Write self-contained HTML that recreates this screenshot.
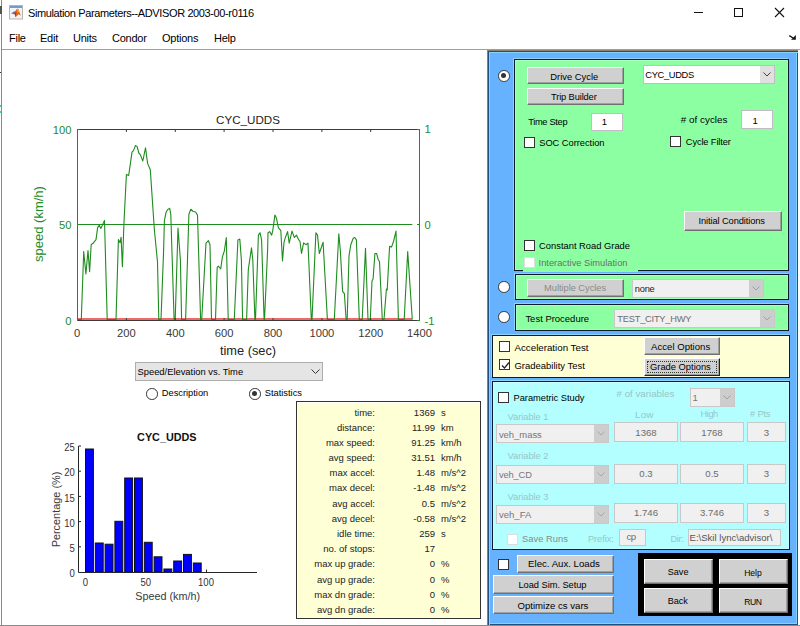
<!DOCTYPE html>
<html><head><meta charset="utf-8">
<style>
*{box-sizing:border-box;margin:0;padding:0}
html,body{width:800px;height:626px;overflow:hidden;background:#fff}
body{position:relative;font-family:"Liberation Sans",sans-serif;color:#000}
.a{position:absolute;white-space:nowrap}
.t{position:absolute;white-space:nowrap;font-size:9.5px;line-height:11px}
.btn{position:absolute;background:#d0d0d0;border-top:1px solid #fff;border-left:1px solid #fff;border-right:1px solid #707070;border-bottom:1px solid #707070;box-shadow:inset -1px -1px 0 #a0a0a0;font-size:9.5px;text-align:center;white-space:nowrap}
.chk{position:absolute;width:11px;height:11px;background:#fff;border:1px solid #333}
.chkd{position:absolute;width:11px;height:11px;background:#fff;border:1px solid #ddd}
.rad{position:absolute;width:11.5px;height:11.5px;border-radius:50%;background:#fff;border:1px solid #333}
.dot{position:absolute;left:2.25px;top:2.25px;width:5px;height:5px;border-radius:50%;background:#333}
.edit{position:absolute;background:#fff;border:1px solid #c4bcc4;font-size:9.5px;text-align:center;white-space:nowrap}
.editd{position:absolute;background:#f0f0f0;border:1px solid #c8c8c8;font-size:9.5px;text-align:center;color:#6d6d6d;white-space:nowrap}
.pop{position:absolute;background:#fff;border:1px solid #c4bcc4;font-size:9.5px;white-space:nowrap}
.popd{position:absolute;background:#f0f0f0;border:1px solid #c8c8c8;font-size:9.5px;white-space:nowrap;color:#6d6d6d}
.arr{position:absolute;right:0;top:0;bottom:0;width:14px;background:#e0e0e0}
.popd .arr{background:#cdcdcd}
.pnl{position:absolute;border:1px solid #0c1a2c;box-shadow:inset 1px 1px 0 rgba(255,255,255,.3),inset -1px -1px 0 rgba(255,255,255,.2),-1px -1px 0 rgba(150,220,255,.8)}
.green{background:#8cffa3}
.yel{background:#ffffd6}
.cyan{background:#b3ffff}
.gr{color:#6d6d6d}
.cg{color:#9cc8c8}
</style></head><body>

<!-- window frame -->
<div class="a" style="left:1px;top:0;width:1px;height:626px;background:#8a8a8a"></div>
<div class="a" style="left:0;top:6px;width:2px;height:8px;background:#555"></div>
<div class="a" style="left:0;top:72px;width:1px;height:1px;background:#333"></div>
<div class="a" style="left:0;top:105px;width:1px;height:2px;background:#4cc9a0"></div>
<div class="a" style="left:0;top:111px;width:1px;height:2px;background:#4cc9a0"></div>
<div class="a" style="left:0;top:625px;width:800px;height:1px;background:#8a8a8a"></div>

<!-- title icon -->
<svg class="a" style="left:0;top:0" width="30" height="24" viewBox="0 0 30 24">
<rect x="9.5" y="5.5" width="13" height="13.5" fill="#f4f4f4" stroke="#b4b4b4"/>
<rect x="10" y="6" width="12" height="2" fill="#6b9fd3"/>
<path d="M11 13.6 L14.2 11.3 L16.3 12.3 L15.2 14.6 Z" fill="#3b8ad2"/>
<path d="M14.3 12.6 L17.2 8.6 L18.6 9.4 L20.8 15.8 L18.6 14.2 L15.6 17.2 Z" fill="#e2621e"/>
<path d="M17.2 8.6 L18.6 9.4 L19.2 12 L17.6 12.5 Z" fill="#f2b233"/>
<path d="M14.3 12.6 L16.3 12.3 L15.6 17.2 Z" fill="#b8321a"/>
</svg>
<div class="a" style="left:28px;top:6px;font-size:11px;letter-spacing:-0.38px;color:#000;line-height:14px">Simulation Parameters--ADVISOR 2003-00-r0116</div>

<!-- window controls -->
<div class="a" style="left:694px;top:12px;width:9px;height:1.3px;background:#111"></div>
<div class="a" style="left:734px;top:8px;width:9px;height:9px;border:1px solid #111"></div>
<svg class="a" style="left:774px;top:7px" width="12" height="12" viewBox="0 0 12 12"><path d="M1 1 L10 10 M10 1 L1 10" stroke="#111" stroke-width="1.1"/></svg>
<svg class="a" style="left:786px;top:32px" width="12" height="10" viewBox="786 32 12 10"><path d="M789.3 35.6 L793 38" stroke="#111" stroke-width="1.3" fill="none"/><path d="M795.8 35 L795.8 39.8 L791 39.8 Z" fill="#111"/></svg>

<!-- menu -->
<div class="a" style="left:9px;top:31px;font-size:11px;line-height:14px;letter-spacing:-0.25px">File</div>
<div class="a" style="left:40px;top:31px;font-size:11px;line-height:14px;letter-spacing:-0.25px">Edit</div>
<div class="a" style="left:73px;top:31px;font-size:11px;line-height:14px;letter-spacing:-0.25px">Units</div>
<div class="a" style="left:112px;top:31px;font-size:11px;line-height:14px;letter-spacing:-0.25px">Condor</div>
<div class="a" style="left:162px;top:31px;font-size:11px;line-height:14px;letter-spacing:-0.25px">Options</div>
<div class="a" style="left:214px;top:31px;font-size:11px;line-height:14px;letter-spacing:-0.25px">Help</div>
<div class="a" style="left:2px;top:49px;width:798px;height:1px;background:#a0a0a0"></div>

<!-- main plot -->
<svg class="a" style="left:0;top:0" width="486" height="626" viewBox="0 0 486 626" font-family="Liberation Sans, sans-serif">
  <rect x="77" y="318" width="335" height="2" fill="#f06a6a"/>
  <line x1="77" y1="224.5" x2="412.3" y2="224.5" stroke="#1e8c1e" stroke-width="1.1"/>
  <polyline points="77,319.5 81.3,319.5 83.7,251.6 85.9,274 88,250.5 89.6,271.6 91.2,244.4 92.8,243.6 96,239.6 97.6,227.6 99.2,225.2 100.8,228.4 102.4,225.2 104.5,220.4 107.2,319.5 116,319.5 118.4,239.6 120,242.8 121.1,237.2 122.4,266.8 124,222 126.4,174.6 128.7,175.4 132,152.2 133.5,150.6 135.5,145.5 137.2,146.6 138.8,153 140.3,154.6 142.8,161 145.5,147.9 147.6,163.4 150.3,169.8 154.3,229 157.5,262 158.8,319.5 161,319.5 163.6,250.8 164.4,220.7 166,212.7 167.6,209.6 169.7,208.3 170.8,214.3 174.1,319.5 175.2,319.5 178,228 180.4,260 181.6,319.5 185.6,319.5 188.9,214.3 190.8,209.2 193.2,211.5 195.6,212 197.5,215.1 200.6,319.5 201.7,319.5 206,243.1 208.4,240.7 210,244.7 211.5,319.5 215.5,319.5 217.2,267.3 218.4,266.1 220.7,269 222.4,256.9 224.3,251.1 226.3,237.5 228.2,319.5 234.3,319.5 237.9,239.9 239.8,239.1 241.4,260 242.6,319.5 246.6,319.5 248.3,269.6 251.5,247.9 252.8,260 254.9,319.5 255.5,319.5 258.4,235.1 260,232.7 261.6,239.9 264.1,319.5 264.5,319.5 267.6,250 268,232.7 269.6,231.6 271.7,235.1 272.8,230.3 274.9,215.1 276.5,218.3 278.4,227.9 280.8,230.3 282.5,261 284,242.3 285.6,236.7 287.6,231.6 289.2,243.1 292,231.1 294.4,237.5 296.4,235.1 298.8,239.9 300,241.5 301.5,253.5 303.6,242.8 305.9,244.7 308,243.1 311.3,319.5 312,319.5 315.9,232.7 317.5,235.1 319.3,253.5 323.1,242.3 327.4,319.5 334.3,319.5 338.8,233.8 340.3,250 342.6,291.4 344.4,293.7 346.1,319.5 347.2,319.5 349,255.8 350.8,244.7 353.2,238.3 354.8,237.5 356.4,239.9 359.3,319.5 362.2,319.5 365.5,248.2 368,319.5 370.3,319.5 372,281.1 373.1,278.8 374.9,253.5 376.6,253.5 378.3,259.8 379.5,261.5 382.3,319.5 384,319.5 386.4,289.1 387.2,290 389.6,246.3 391.5,247.1 393.5,241.5 396,231.1 398.4,319.5 404.2,319.5 407.7,251.5 412.3,319.5" fill="none" stroke="#1e8c1e" stroke-width="1.1" stroke-linejoin="round"/>
  <!-- spines -->
  <line x1="77" y1="129.5" x2="419.5" y2="129.5" stroke="#3a3a3a" stroke-width="1"/>
  <line x1="77" y1="320.5" x2="419.5" y2="320.5" stroke="#3a3a3a" stroke-width="1"/>
  <line x1="77.5" y1="129" x2="77.5" y2="321" stroke="#1e8c1e" stroke-width="1"/>
  <line x1="419.5" y1="129" x2="419.5" y2="321" stroke="#1e8c1e" stroke-width="1"/>
  <!-- left ticks -->
  <path d="M77 224.5 h2.5 M77 129.5 h2.5 M417 224.5 h2.5 M417 129.5 h2.5 M417 320.5 h2.5" stroke="#1e8c1e"/>
  <!-- x ticks -->
  <path d="M126.4 129.5 v2.5 M175.3 129.5 v2.5 M224.1 129.5 v2.5 M273 129.5 v2.5 M321.9 129.5 v2.5 M370.7 129.5 v2.5 M126.4 320.5 v-2.5 M175.3 320.5 v-2.5 M224.1 320.5 v-2.5 M273 320.5 v-2.5 M321.9 320.5 v-2.5 M370.7 320.5 v-2.5" stroke="#3a3a3a"/>
  <g fill="#1e8c1e" font-size="11.2" text-anchor="end">
    <text x="71.5" y="133.5">100</text>
    <text x="71.5" y="229">50</text>
    <text x="71.5" y="325">0</text>
  </g>
  <g fill="#1e8c1e" font-size="11.2" text-anchor="start">
    <text x="424.5" y="133">1</text>
    <text x="424.5" y="229">0</text>
    <text x="424.5" y="325">-1</text>
  </g>
  <g fill="#3a3a3a" font-size="11.2" text-anchor="middle">
    <text x="77" y="336.8">0</text>
    <text x="126.4" y="336.8">200</text>
    <text x="175.3" y="336.8">400</text>
    <text x="224.1" y="336.8">600</text>
    <text x="273" y="336.8">800</text>
    <text x="321.9" y="336.8">1000</text>
    <text x="370.7" y="336.8">1200</text>
    <text x="419.5" y="336.8">1400</text>
  </g>
  <text x="248" y="355" fill="#222" font-size="12.8" text-anchor="middle">time (sec)</text>
  <text x="248" y="123.5" fill="#222" font-size="11.6" text-anchor="middle">CYC_UDDS</text>
  <text transform="translate(43.2,224) rotate(-90)" fill="#1e8c1e" font-size="13" text-anchor="middle">speed (km/h)</text>

  <!-- histogram -->
  <g fill="#0000ff" stroke="#111" stroke-width="1">
    <rect x="85.5" y="449" width="7.9" height="123"/>
    <rect x="95.3" y="543" width="7.9" height="29"/>
    <rect x="105.1" y="544.2" width="7.9" height="27.8"/>
    <rect x="114.9" y="521.3" width="7.9" height="50.7"/>
    <rect x="124.7" y="478" width="7.9" height="94"/>
    <rect x="134.5" y="478" width="7.9" height="94"/>
    <rect x="144.3" y="542.3" width="7.9" height="29.7"/>
    <rect x="154.1" y="556.8" width="7.9" height="15.2"/>
    <rect x="163.9" y="569" width="7.9" height="3"/>
    <rect x="173.7" y="561" width="7.9" height="11"/>
    <rect x="183.5" y="554.4" width="7.9" height="17.6"/>
    <rect x="193.3" y="563" width="7.9" height="9"/>
  </g>
  <path d="M78.5 446 V572.5 H257" stroke="#262626" fill="none"/>
  <path d="M78.5 446 h2.5 M78.5 471.2 h2.5 M78.5 496.4 h2.5 M78.5 521.6 h2.5 M78.5 546.8 h2.5 M206.5 572 v-2.5" stroke="#262626"/>
  <g fill="#333" font-size="10.6" text-anchor="end">
    <text transform="translate(74.8,451.2) scale(0.9,1)">25</text>
    <text transform="translate(74.8,476.4) scale(0.9,1)">20</text>
    <text transform="translate(74.8,501.6) scale(0.9,1)">15</text>
    <text transform="translate(74.8,526.8) scale(0.9,1)">10</text>
    <text transform="translate(74.8,552) scale(0.9,1)">5</text>
    <text transform="translate(74.8,577.2) scale(0.9,1)">0</text>
  </g>
  <g fill="#333" font-size="10.6" text-anchor="middle">
    <text transform="translate(85.4,585.9) scale(0.9,1)">0</text>
    <text transform="translate(145.7,585.9) scale(0.9,1)">50</text>
    <text transform="translate(206,585.9) scale(0.9,1)">100</text>
  </g>
  <text x="167.6" y="599.7" fill="#3a3a3a" font-size="10.8" text-anchor="middle">Speed (km/h)</text>
  <text x="166.8" y="441.1" fill="#111" font-size="10.8" font-weight="bold" text-anchor="middle">CYC_UDDS</text>
  <text transform="translate(59.6,509.5) rotate(-90)" fill="#3a3a3a" font-size="10.9" text-anchor="middle">Percentage (%)</text>
</svg>

<div class="a" style="left:135px;top:362px;width:188px;height:19px;background:#e5e5e5;border:1px solid #adadad"></div>
<div class="a" style="left:137.50px;top:367.13px;font-size:9.37px;line-height:11.25px;">Speed/Elevation vs. Time</div>
<svg class="a" style="left:311px;top:369px" width="9" height="5" viewBox="0 0 9 5"><path d="M0.5 0.5 L4.5 4.5 L8.5 0.5" stroke="#333" fill="none" stroke-width="1"/></svg>
<div class="rad" style="left:146px;top:388px"></div>
<div class="a" style="left:161.75px;top:387.95px;font-size:9.30px;line-height:11.16px;">Description</div>
<div class="rad" style="left:249px;top:388px"><div class="dot"></div></div>
<div class="a" style="left:264.75px;top:387.94px;font-size:9.31px;line-height:11.17px;">Statistics</div>
<div class="a" style="left:296px;top:401px;width:185px;height:218px;background:#ffffd6;border:1px solid #333;box-shadow:inset 1px 1px 0 #fff"></div>
<div class="t" style="left:296px;width:79px;text-align:right;top:406.5px;color:#222">time:</div>
<div class="t" style="left:380px;width:55px;text-align:right;top:406.5px;color:#222">1369</div>
<div class="t" style="left:441px;top:406.5px;color:#222">s</div>
<div class="t" style="left:296px;width:79px;text-align:right;top:421.7px;color:#222">distance:</div>
<div class="t" style="left:380px;width:55px;text-align:right;top:421.7px;color:#222">11.99</div>
<div class="t" style="left:441px;top:421.7px;color:#222">km</div>
<div class="t" style="left:296px;width:79px;text-align:right;top:436.9px;color:#222">max speed:</div>
<div class="t" style="left:380px;width:55px;text-align:right;top:436.9px;color:#222">91.25</div>
<div class="t" style="left:441px;top:436.9px;color:#222">km/h</div>
<div class="t" style="left:296px;width:79px;text-align:right;top:452.1px;color:#222">avg speed:</div>
<div class="t" style="left:380px;width:55px;text-align:right;top:452.1px;color:#222">31.51</div>
<div class="t" style="left:441px;top:452.1px;color:#222">km/h</div>
<div class="t" style="left:296px;width:79px;text-align:right;top:467.3px;color:#222">max accel:</div>
<div class="t" style="left:380px;width:55px;text-align:right;top:467.3px;color:#222">1.48</div>
<div class="t" style="left:441px;top:467.3px;color:#222">m/s^2</div>
<div class="t" style="left:296px;width:79px;text-align:right;top:482.4px;color:#222">max decel:</div>
<div class="t" style="left:380px;width:55px;text-align:right;top:482.4px;color:#222">-1.48</div>
<div class="t" style="left:441px;top:482.4px;color:#222">m/s^2</div>
<div class="t" style="left:296px;width:79px;text-align:right;top:497.6px;color:#222">avg accel:</div>
<div class="t" style="left:380px;width:55px;text-align:right;top:497.6px;color:#222">0.5</div>
<div class="t" style="left:441px;top:497.6px;color:#222">m/s^2</div>
<div class="t" style="left:296px;width:79px;text-align:right;top:512.8px;color:#222">avg decel:</div>
<div class="t" style="left:380px;width:55px;text-align:right;top:512.8px;color:#222">-0.58</div>
<div class="t" style="left:441px;top:512.8px;color:#222">m/s^2</div>
<div class="t" style="left:296px;width:79px;text-align:right;top:528.0px;color:#222">idle time:</div>
<div class="t" style="left:380px;width:55px;text-align:right;top:528.0px;color:#222">259</div>
<div class="t" style="left:441px;top:528.0px;color:#222">s</div>
<div class="t" style="left:296px;width:79px;text-align:right;top:543.2px;color:#222">no. of stops:</div>
<div class="t" style="left:380px;width:55px;text-align:right;top:543.2px;color:#222">17</div>
<div class="t" style="left:296px;width:79px;text-align:right;top:558.4px;color:#222">max up grade:</div>
<div class="t" style="left:380px;width:55px;text-align:right;top:558.4px;color:#222">0</div>
<div class="t" style="left:441px;top:558.4px;color:#222">%</div>
<div class="t" style="left:296px;width:79px;text-align:right;top:573.6px;color:#222">avg up grade:</div>
<div class="t" style="left:380px;width:55px;text-align:right;top:573.6px;color:#222">0</div>
<div class="t" style="left:441px;top:573.6px;color:#222">%</div>
<div class="t" style="left:296px;width:79px;text-align:right;top:588.8px;color:#222">max dn grade:</div>
<div class="t" style="left:380px;width:55px;text-align:right;top:588.8px;color:#222">0</div>
<div class="t" style="left:441px;top:588.8px;color:#222">%</div>
<div class="t" style="left:296px;width:79px;text-align:right;top:604.0px;color:#222">avg dn grade:</div>
<div class="t" style="left:380px;width:55px;text-align:right;top:604.0px;color:#222">0</div>
<div class="t" style="left:441px;top:604.0px;color:#222">%</div>

<!-- right panel -->
<div class="a" style="left:487px;top:50px;width:311px;height:575px;background:#66b2ff;box-shadow:inset 1px 1px 0 #8c8070,inset 2px 2px 0 #22507e,inset 3px 3px 0 #86d2ff,inset -1px -1px 0 #22507e,inset -2px -2px 0 #86d2ff"></div>
<div class="pnl green" style="left:514px;top:59px;width:275px;height:212px"></div>
<div class="rad" style="left:498px;top:70px"><div class="dot"></div></div>
<div class="btn" style="left:527px;top:67px;width:97px;height:17px"></div>
<div class="a" style="left:550.30px;top:70.51px;font-size:9.39px;line-height:11.27px;">Drive Cycle</div>
<div class="btn" style="left:527px;top:88px;width:97px;height:17px"></div>
<div class="a" style="left:551.00px;top:91.60px;font-size:9.30px;line-height:11.16px;letter-spacing:-0.13px;">Trip Builder</div>
<div class="pop" style="left:643px;top:65px;width:132px;height:19px"><div class="arr"><svg style="position:absolute;left:3px;top:50%;margin-top:-2.5px" width="8" height="5" viewBox="0 0 8 5"><path d="M0.5 0.5 L4 4 L7.5 0.5" stroke="#444" fill="none"/></svg></div></div>
<div class="a" style="left:645.25px;top:70.30px;font-size:9.30px;line-height:11.16px;letter-spacing:-0.32px;">CYC_UDDS</div>
<div class="a" style="left:528.25px;top:116.60px;font-size:9.30px;line-height:11.16px;letter-spacing:-0.34px;">Time Step</div>
<div class="edit" style="left:591px;top:113px;width:32px;height:18px"></div>
<div class="a" style="left:601.80px;top:116.41px;font-size:9.50px;line-height:11.4px;">1</div>
<div class="a" style="left:680.80px;top:113.94px;font-size:9.89px;line-height:11.86px;">#&nbsp;of&nbsp;cycles</div>
<div class="edit" style="left:741px;top:110px;width:32px;height:19px"></div>
<div class="a" style="left:752.50px;top:115.01px;font-size:9.50px;line-height:11.4px;">1</div>
<div class="chk" style="left:524px;top:137px"></div>
<div class="a" style="left:539.25px;top:137.80px;font-size:9.30px;line-height:11.16px;letter-spacing:-0.03px;">SOC Correction</div>
<div class="chk" style="left:670px;top:136px"></div>
<div class="a" style="left:685.80px;top:136.70px;font-size:9.30px;line-height:11.16px;letter-spacing:-0.13px;">Cycle Filter</div>
<div class="btn" style="left:684px;top:211px;width:98px;height:20px"></div>
<div class="a" style="left:698.50px;top:216.30px;font-size:9.30px;line-height:11.16px;letter-spacing:-0.10px;">Initial Conditions</div>
<div class="chk" style="left:524px;top:240px"></div>
<div class="a" style="left:539.10px;top:241.14px;font-size:9.36px;line-height:11.23px;">Constant Road Grade</div>
<div class="a green" style="left:523px;top:254px;width:115px;height:18px"></div>
<div class="chkd" style="left:524px;top:257px"></div>
<div class="a" style="left:538.60px;top:257.59px;font-size:9.31px;line-height:11.17px;color:#6d6d6d;">Interactive Simulation</div>
<div class="pnl green" style="left:515px;top:274px;width:274px;height:26px"></div>
<div class="rad" style="left:498px;top:281px"></div>
<div class="btn" style="left:527px;top:279px;width:97px;height:18px"></div>
<div class="a" style="left:544.10px;top:282.60px;font-size:9.30px;line-height:11.16px;letter-spacing:-0.04px;color:#8a8a8a;">Multiple Cycles</div>
<div class="popd" style="left:632px;top:279px;width:132px;height:19px"><div class="arr"><svg style="position:absolute;left:3px;top:50%;margin-top:-2.5px" width="8" height="5" viewBox="0 0 8 5"><path d="M0.5 0.5 L4 4 L7.5 0.5" stroke="#a0a0a0" fill="none"/></svg></div></div>
<div class="a" style="left:634.80px;top:284.00px;font-size:9.30px;line-height:11.16px;letter-spacing:-0.23px;color:#222;">none</div>
<div class="pnl green" style="left:515px;top:304px;width:274px;height:27px"></div>
<div class="rad" style="left:498px;top:311px"></div>
<div class="a" style="left:525.40px;top:313.43px;font-size:9.47px;line-height:11.37px;">Test Procedure</div>
<div class="popd" style="left:614px;top:309px;width:161px;height:19px"><div class="arr"><svg style="position:absolute;left:3px;top:50%;margin-top:-2.5px" width="8" height="5" viewBox="0 0 8 5"><path d="M0.5 0.5 L4 4 L7.5 0.5" stroke="#a0a0a0" fill="none"/></svg></div></div>
<div class="a" style="left:617.30px;top:313.70px;font-size:9.30px;line-height:11.16px;letter-spacing:-0.23px;color:#6d6d6d;">TEST_CITY_HWY</div>
<div class="pnl yel" style="left:492px;top:335px;width:298px;height:43px"></div>
<div class="chk" style="left:499px;top:341px"></div>
<div class="a" style="left:514.50px;top:341.88px;font-size:9.74px;line-height:11.69px;">Acceleration Test</div>
<div class="chk" style="left:499px;top:359px"><svg style="position:absolute;left:1px;top:1px" width="9" height="9" viewBox="0 0 9 9"><path d="M1 4.5 L3.5 7 L8 1.5" stroke="#222" fill="none" stroke-width="1.2"/></svg></div>
<div class="a" style="left:514.50px;top:359.53px;font-size:9.48px;line-height:11.37px;">Gradeability Test</div>
<div class="btn" style="left:644px;top:337px;width:76px;height:18px"></div>
<div class="a" style="left:651.10px;top:340.92px;font-size:9.59px;line-height:11.51px;">Accel Options</div>
<div class="btn" style="left:644px;top:358px;width:76px;height:18px;border-color:#fff #222 #222 #fff"><div style="position:absolute;left:2px;top:2px;right:2px;bottom:2px;border:1px dotted #333"></div></div>
<div class="a" style="left:650.00px;top:361.64px;font-size:9.36px;line-height:11.24px;">Grade Options</div>
<div class="pnl cyan" style="left:492px;top:381px;width:298px;height:169px"></div>
<div class="chk" style="left:498px;top:392px"></div>
<div class="a" style="left:513.50px;top:392.70px;font-size:9.30px;line-height:11.16px;letter-spacing:-0.02px;">Parametric Study</div>
<div class="a" style="left:616.50px;top:387.52px;font-size:9.75px;line-height:11.7px;color:#98c6c6;">#&nbsp;of&nbsp;variables</div>
<div class="popd" style="left:690px;top:388px;width:45px;height:19px"><div class="arr"><svg style="position:absolute;left:3px;top:50%;margin-top:-2.5px" width="8" height="5" viewBox="0 0 8 5"><path d="M0.5 0.5 L4 4 L7.5 0.5" stroke="#a0a0a0" fill="none"/></svg></div></div>
<div class="a" style="left:692.50px;top:391.51px;font-size:9.50px;line-height:11.4px;color:#777;">1</div>
<div class="a" style="left:507.50px;top:411.90px;font-size:9.30px;line-height:11.16px;letter-spacing:-0.02px;color:#98c6c6;">Variable 1</div>
<div class="a" style="left:635.00px;top:408.63px;font-size:9.90px;line-height:11.88px;letter-spacing:0.17px;color:#98c6c6;">Low</div>
<div class="a" style="left:700.50px;top:409.20px;font-size:9.30px;line-height:11.16px;letter-spacing:-0.45px;color:#98c6c6;">High</div>
<div class="a" style="left:750.00px;top:409.20px;font-size:9.30px;line-height:11.16px;letter-spacing:-0.17px;color:#98c6c6;">#&nbsp;Pts</div>
<div class="popd" style="left:496px;top:424px;width:113px;height:19px"><div class="arr"><svg style="position:absolute;left:3px;top:50%;margin-top:-2.5px" width="8" height="5" viewBox="0 0 8 5"><path d="M0.5 0.5 L4 4 L7.5 0.5" stroke="#a8a8a8" fill="none"/></svg></div></div>
<div class="a" style="left:498.90px;top:428.57px;font-size:9.44px;line-height:11.32px;color:#777;">veh_mass</div>
<div class="editd" style="left:614px;top:422px;width:64px;height:20px"></div>
<div class="a" style="left:635.32px;top:426.91px;font-size:9.60px;line-height:11.52px;color:#6d6d6d;">1368</div>
<div class="editd" style="left:680px;top:422px;width:64px;height:20px"></div>
<div class="a" style="left:701.32px;top:426.91px;font-size:9.60px;line-height:11.52px;color:#6d6d6d;">1768</div>
<div class="editd" style="left:747px;top:422px;width:39px;height:20px"></div>
<div class="a" style="left:763.83px;top:426.91px;font-size:9.60px;line-height:11.52px;color:#6d6d6d;">3</div>
<div class="popd" style="left:496px;top:465px;width:113px;height:19px"><div class="arr"><svg style="position:absolute;left:3px;top:50%;margin-top:-2.5px" width="8" height="5" viewBox="0 0 8 5"><path d="M0.5 0.5 L4 4 L7.5 0.5" stroke="#a8a8a8" fill="none"/></svg></div></div>
<div class="a" style="left:498.90px;top:469.70px;font-size:9.30px;line-height:11.16px;letter-spacing:-0.12px;color:#777;">veh_CD</div>
<div class="editd" style="left:614px;top:464px;width:64px;height:20px"></div>
<div class="a" style="left:639.33px;top:468.41px;font-size:9.60px;line-height:11.52px;color:#6d6d6d;">0.3</div>
<div class="editd" style="left:680px;top:464px;width:64px;height:20px"></div>
<div class="a" style="left:705.33px;top:468.41px;font-size:9.60px;line-height:11.52px;color:#6d6d6d;">0.5</div>
<div class="editd" style="left:747px;top:464px;width:39px;height:20px"></div>
<div class="a" style="left:763.83px;top:468.41px;font-size:9.60px;line-height:11.52px;color:#6d6d6d;">3</div>
<div class="popd" style="left:496px;top:505px;width:113px;height:19px"><div class="arr"><svg style="position:absolute;left:3px;top:50%;margin-top:-2.5px" width="8" height="5" viewBox="0 0 8 5"><path d="M0.5 0.5 L4 4 L7.5 0.5" stroke="#a8a8a8" fill="none"/></svg></div></div>
<div class="a" style="left:498.90px;top:509.40px;font-size:9.61px;line-height:11.54px;color:#777;">veh_FA</div>
<div class="editd" style="left:614px;top:503px;width:64px;height:20px"></div>
<div class="a" style="left:633.99px;top:507.41px;font-size:9.60px;line-height:11.52px;color:#6d6d6d;">1.746</div>
<div class="editd" style="left:680px;top:503px;width:64px;height:20px"></div>
<div class="a" style="left:699.99px;top:507.41px;font-size:9.60px;line-height:11.52px;color:#6d6d6d;">3.746</div>
<div class="editd" style="left:747px;top:503px;width:39px;height:20px"></div>
<div class="a" style="left:763.83px;top:507.41px;font-size:9.60px;line-height:11.52px;color:#6d6d6d;">3</div>
<div class="a" style="left:507.50px;top:450.70px;font-size:9.30px;line-height:11.16px;letter-spacing:-0.02px;color:#98c6c6;">Variable 2</div>
<div class="a" style="left:507.50px;top:492.30px;font-size:9.30px;line-height:11.16px;letter-spacing:-0.02px;color:#98c6c6;">Variable 3</div>
<div class="chkd" style="left:507px;top:534px"></div>
<div class="a" style="left:522.10px;top:534.04px;font-size:9.36px;line-height:11.24px;color:#8a8a8a;">Save Runs</div>
<div class="a" style="left:587.90px;top:534.10px;font-size:9.30px;line-height:11.16px;letter-spacing:-0.06px;color:#98c6c6;">Prefix:</div>
<div class="editd" style="left:619px;top:529px;width:27px;height:17px"></div>
<div class="a" style="left:626.50px;top:531.41px;font-size:9.60px;line-height:11.52px;letter-spacing:-0.45px;color:#6d6d6d;">cp</div>
<div class="a" style="left:670.50px;top:533.70px;font-size:9.30px;line-height:11.16px;letter-spacing:-0.45px;color:#98c6c6;">Dir:</div>
<div class="editd" style="left:688px;top:529px;width:93px;height:17px"></div>
<div class="a" style="left:689.50px;top:531.84px;font-size:9.57px;line-height:11.49px;color:#555;">E:\Skil lync\advisor\</div>
<div class="chk" style="left:498px;top:559px"></div>
<div class="btn" style="left:517px;top:555px;width:97px;height:18px"></div>
<div class="a" style="left:528.10px;top:558.38px;font-size:9.64px;line-height:11.57px;">Elec. Aux. Loads</div>
<div class="btn" style="left:493px;top:575px;width:121px;height:19px"></div>
<div class="a" style="left:518.50px;top:579.70px;font-size:9.30px;line-height:11.16px;letter-spacing:-0.05px;">Load Sim. Setup</div>
<div class="btn" style="left:493px;top:596px;width:121px;height:18px"></div>
<div class="a" style="left:517.50px;top:600.01px;font-size:9.61px;line-height:11.53px;">Optimize cs vars</div>
<div class="a" style="left:638px;top:553px;width:154px;height:63px;background:#000"></div>
<div class="btn" style="left:644px;top:559px;width:69px;height:25px"></div>
<div class="a" style="left:667.70px;top:567.06px;font-size:9.13px;line-height:10.95px;">Save</div>
<div class="btn" style="left:719px;top:559px;width:69px;height:25px"></div>
<div class="a" style="left:744.20px;top:567.56px;font-size:8.60px;line-height:10.32px;letter-spacing:-0.06px;">Help</div>
<div class="btn" style="left:644px;top:588px;width:69px;height:25px"></div>
<div class="a" style="left:667.70px;top:596.40px;font-size:9.09px;line-height:10.9px;">Back</div>
<div class="btn" style="left:719px;top:588px;width:69px;height:25px"></div>
<div class="a" style="left:744.20px;top:596.86px;font-size:8.60px;line-height:10.32px;letter-spacing:-0.45px;">RUN</div>

</body></html>
